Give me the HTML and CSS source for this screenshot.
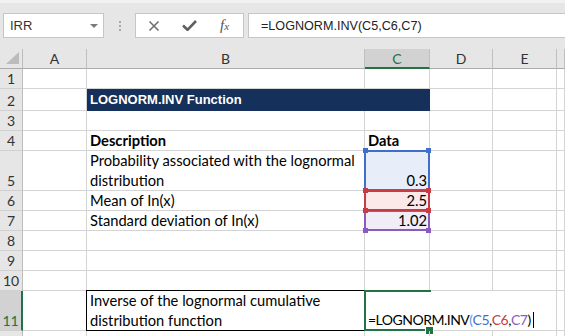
FILE: index.html
```html
<!DOCTYPE html>
<html lang="en">
<head>
  <meta charset="UTF-8">
  <title>LOGNORM.INV</title>
  <link rel="stylesheet" href="styles.css">
</head>
<body>
  <div class="toolbar">
    <div class="namebox"><span>IRR</span><span class="caret"></span></div>
    <div class="grip"><i></i><i></i><i></i></div>
    <div class="fbtns">
      <svg width="12" height="10" viewBox="0 0 12 10"><path d="M1.5 0.5 L10.5 9.5 M10.5 0.5 L1.5 9.5" stroke="#6d6d6d" stroke-width="1.5" fill="none"/></svg>
      <svg width="15" height="11" viewBox="0 0 15 11"><path d="M1 5.5 L5.5 9.8 L14 1" stroke="#5f5f5f" stroke-width="2.6" fill="none"/></svg>
      <span class="fx">f<span>x</span></span>
    </div>
    <div class="fbar">=LOGNORM.INV(C5,C6,C7)</div>
  </div>

  <div class="sheet">
    <!-- column headers -->
    <div class="corner"><svg width="14" height="13" viewBox="0 0 14 13"><path d="M13 0 L13 12 L0 12 Z" fill="#bcbcbc"/></svg></div>
    <div class="ch">A</div>
    <div class="ch">B</div>
    <div class="ch sel">C</div>
    <div class="ch">D</div>
    <div class="ch">E</div>
    <div class="ch"></div>

    <!-- 1 -->
    <div class="rh">1</div><div class="c"></div><div class="c"></div><div class="c"></div><div class="c"></div><div class="c"></div><div class="c"></div>
    <!-- 2 -->
    <div class="rh">2</div><div class="c"></div>
    <div class="c title">LOGNORM.INV Function</div>
    <div class="c"></div><div class="c"></div><div class="c"></div>
    <!-- 3 -->
    <div class="rh">3</div><div class="c"></div><div class="c"></div><div class="c"></div><div class="c"></div><div class="c"></div><div class="c"></div>
    <!-- 4 -->
    <div class="rh">4</div><div class="c"></div>
    <div class="c bold">Description</div>
    <div class="c bold">Data</div>
    <div class="c"></div><div class="c"></div><div class="c"></div>
    <!-- 5 -->
    <div class="rh">5</div><div class="c"></div>
    <div class="c">Probability associated with the lognormal<br>distribution</div>
    <div class="c num blue">0.3<span class="range"><b class="tl"></b><b class="tr"></b><b class="bl"></b><b class="br"></b></span></div>
    <div class="c"></div><div class="c"></div><div class="c"></div>
    <!-- 6 -->
    <div class="rh">6</div><div class="c"></div>
    <div class="c">Mean of In(x)</div>
    <div class="c num red">2.5<span class="range"><b class="tl"></b><b class="tr"></b><b class="bl"></b><b class="br"></b></span></div>
    <div class="c"></div><div class="c"></div><div class="c"></div>
    <!-- 7 -->
    <div class="rh">7</div><div class="c"></div>
    <div class="c">Standard deviation of In(x)</div>
    <div class="c num purple">1.02<span class="range"><b class="tl"></b><b class="tr"></b><b class="bl"></b><b class="br"></b></span></div>
    <div class="c"></div><div class="c"></div><div class="c"></div>
    <!-- 8 -->
    <div class="rh">8</div><div class="c"></div><div class="c"></div><div class="c"></div><div class="c"></div><div class="c"></div><div class="c"></div>
    <!-- 9 -->
    <div class="rh">9</div><div class="c"></div><div class="c"></div><div class="c"></div><div class="c"></div><div class="c"></div><div class="c"></div>
    <!-- 10 -->
    <div class="rh">10</div><div class="c"></div><div class="c"></div><div class="c"></div><div class="c"></div><div class="c"></div><div class="c"></div>
    <!-- 11 -->
    <div class="rh sel">11</div><div class="c"></div>
    <div class="c">Inverse of the lognormal cumulative<br>distribution function<span class="outline"></span></div>
    <div class="c edit">=LOGNORM.INV<span class="k-paren">(</span><span class="k-blue">C5</span>,<span class="k-red">C6</span>,<span class="k-purple">C7</span>)<span class="cursor"></span><span class="active"></span></div>
    <div class="c"></div>
    <!-- 12 -->
    <div class="rh"></div><div class="c"></div><div class="c"></div><div class="c"></div><div class="c"></div><div class="c"></div><div class="c"></div>
  </div>
</body>
</html>
```

FILE: styles.css
```css
* {
  box-sizing: border-box;
}

body {
  margin: 0;
  width: 565px;
  height: 336px;
  overflow: hidden;
  background: #fff;
  font-family: "Lato", "Liberation Sans", sans-serif;
}

/* formula bar */
.toolbar {
  height: 49px;
  background: #e6e6e6;
  border-top: 3px solid #f1f1f1;
  padding-top: 10px;
  display: flex;
  align-items: flex-start;
}

.namebox {
  margin-left: 3px;
  width: 101px;
  height: 25px;
  background: #fff;
  border: 1px solid #c6c6c6;
  display: flex;
  align-items: center;
  justify-content: space-between;
  padding: 0 5px 0 6px;
  font-family: "Liberation Sans", sans-serif;
  font-size: 13px;
  color: #333;
}

.caret {
  width: 0;
  height: 0;
  border-left: 4px solid transparent;
  border-right: 4px solid transparent;
  border-top: 4px solid #7a7a7a;
}

.grip {
  width: 31px;
  height: 25px;
  display: flex;
  flex-direction: column;
  align-items: center;
  justify-content: center;
  gap: 2px;
}

.grip i {
  width: 2px;
  height: 2px;
  background: #a9a9a9;
}

.fbtns {
  width: 109px;
  height: 25px;
  background: #fff;
  border: 1px solid #c6c6c6;
  display: flex;
  align-items: center;
  padding-left: 12px;
  gap: 22px;
}

.fx {
  font-family: "Liberation Serif", serif;
  font-style: italic;
  font-size: 15px;
  color: #555;
  margin-left: 1px;
}

.fx span {
  font-size: 11px;
}

.fbar {
  flex: 1;
  margin-left: 4px;
  height: 25px;
  background: #fff;
  border: 1px solid #c6c6c6;
  border-right: none;
  display: flex;
  align-items: center;
  padding-left: 12px;
  font-family: "Liberation Sans", sans-serif;
  font-size: 12.6px;
  color: #222;
}

/* grid */
.sheet {
  display: grid;
  grid-template-columns: 23px 64px 278px 65px 63px 64px 1fr;
  grid-template-rows: 20px 20px 22px 20px 20px 40px 20px 20px 20px 20px 20px 40px 20px;
  height: 287px;
  overflow: hidden;
  font-size: 14.7px;
}

.corner {
  background: #e6e6e6;
  border-right: 1px solid #bdbdbd;
  border-bottom: 1px solid #ababab;
  display: flex;
  align-items: flex-end;
  justify-content: flex-end;
  padding: 0 2px 3px 0;
}

.ch {
  background: #e6e6e6;
  border-right: 1px solid #bfbfbf;
  border-bottom: 1px solid #ababab;
  display: flex;
  align-items: center;
  justify-content: center;
  font-size: 14px;
  color: #333;
}

.ch.sel {
  background: #d2d2d2;
  border-bottom: 2px solid #217346;
  color: #217346;
}

.rh {
  background: #e6e6e6;
  border-right: 1px solid #bdbdbd;
  border-bottom: 1px solid #d0d0d0;
  display: flex;
  align-items: flex-end;
  justify-content: center;
  line-height: 19px;
  font-size: 14px;
  color: #333;
}

.rh.sel {
  background: #d2d2d2;
  border-right: 2px solid #217346;
  color: #217346;
}

.c {
  position: relative;
  border-right: 1px solid #d4d4d4;
  border-bottom: 1px solid #d4d4d4;
  padding: 0 3px;
  display: flex;
  align-items: flex-end;
  white-space: nowrap;
  line-height: 20px;
  color: #000;
}

.bold {
  font-weight: bold;
}

.title {
  grid-column: span 2;
  background: #15305a;
  border-color: #15305a;
  align-items: center;
  font-family: "Liberation Sans", sans-serif;
  font-weight: bold;
  font-size: 13px;
  color: #fff;
}

.num {
  justify-content: flex-end;
  padding-right: 2px;
}

/* coloured reference ranges */
.blue { background: #e8eef9; }
.red { background: #fbe8e9; }
.purple { background: #f0edf7; }

.range {
  position: absolute;
  left: -1px;
  top: -1px;
  right: -1px;
  bottom: -1px;
  border: 2px solid;
}

.blue .range { border-color: #3f6fcb; z-index: 1; }
.purple .range { border-color: #8a5bbf; z-index: 2; }
.red .range { border-color: #c63b45; z-index: 3; }

.range b {
  position: absolute;
  width: 5px;
  height: 5px;
}

.blue .range b { background: #3f6fcb; }
.red .range b { background: #c63b45; }
.purple .range b { background: #8a5bbf; }

.range .tl { left: -3px; top: -4px; }
.range .tr { right: -3px; top: -4px; }
.range .bl { left: -3px; bottom: -4px; }
.range .br { right: -3px; bottom: -4px; }

/* row 11 */
.outline {
  position: absolute;
  left: -1px;
  top: -1px;
  right: -1px;
  bottom: -1px;
  border: 1px solid #000;
}

.edit {
  grid-column: span 3;
  padding-left: 3px;
  font-size: 14px;
  letter-spacing: -0.5px;
}

.k-paren { color: #5b9bd5; }
.k-blue { color: #3f6fcb; }
.k-red { color: #c63b45; }
.k-purple { color: #8a5bbf; }

.cursor {
  width: 1px;
  height: 16px;
  margin: 0 0 2px 2px;
  background: #000;
}

.active {
  position: absolute;
  left: -1px;
  top: -1px;
  width: 67px;
  height: 41px;
  border-top: 2px solid #217346;
  border-left: 2px solid #217346;
}

.active::before {
  content: "";
  position: absolute;
  left: -2px;
  bottom: 0;
  width: 64px;
  height: 2px;
  background: #217346;
}

.active::after {
  content: "";
  position: absolute;
  left: 59px;
  bottom: -4px;
  width: 7px;
  height: 7px;
  background: #217346;
  border: 1px solid #fff;
}
```
